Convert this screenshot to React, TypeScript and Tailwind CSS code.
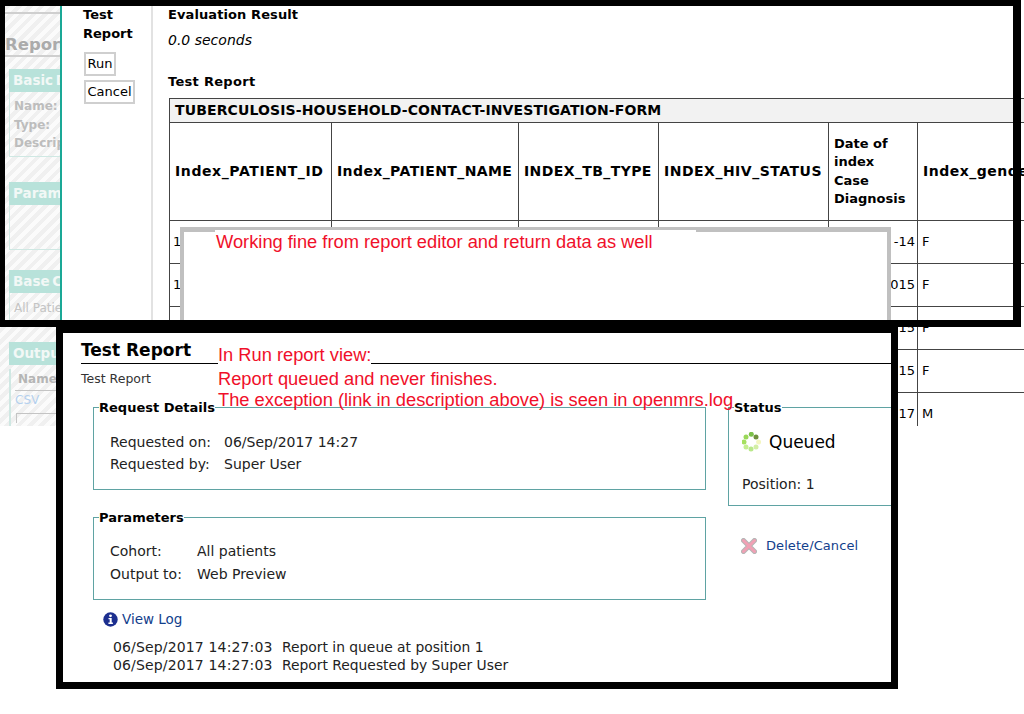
const hatch =
  "bg-[repeating-linear-gradient(135deg,#f0f0f0_0px,#f0f0f0_4px,#fbfbfb_4px,#fbfbfb_8px)]";

const columns = [
  { label: "Index_PATIENT_ID", width: "w-[162px]", type: "text-[14px] tracking-[0.6px]" },
  { label: "Index_PATIENT_NAME", width: "w-[187px]", type: "text-[14px] tracking-[0.4px]" },
  { label: "INDEX_TB_TYPE", width: "w-[140px]", type: "text-[14px] tracking-[0.4px]" },
  { label: "INDEX_HIV_STATUS", width: "w-[170px]", type: "text-[14px] tracking-[0.5px]" },
  { label: "Date of\nindex\nCase\nDiagnosis", width: "w-[89px]", type: "text-[13px]" },
  { label: "Index_gender", width: "w-[140px]", type: "text-[14px] tracking-[0.5px]" },
];

const rows = [
  { id: "1", date: "-14", gender: "F" },
  { id: "1", date: "015", gender: "F" },
  { id: "1", date: "15", gender: "F" },
  { id: "1", date: "15", gender: "F" },
  { id: "1", date: "17", gender: "M" },
];

function SideHeader({ children, className }: { children: string; className?: string }) {
  return (
    <div
      className={`h-[23px] bg-[#b8e2da] pl-[4px] text-[13.5px] leading-[23px] font-bold text-[#f2f8f6] [word-spacing:-2px] whitespace-nowrap overflow-hidden ${className ?? ""}`}
    >
      {children}
    </div>
  );
}

function Sidebar() {
  return (
    <div className={`relative w-[60px] h-full shrink-0 overflow-hidden ${hatch}`}>
      <div className="mt-[12px] ml-[5px] h-[45px] border-y-2 border-[#cfcfcf] pt-[21px] text-[16.5px] leading-[20px] font-bold text-[#ababab] whitespace-nowrap">
        Repor
      </div>
      <div className="mt-[12px] ml-[9px]">
        <SideHeader>Basic D</SideHeader>
        <div className="h-[65px] border-l border-b border-[#cfe8e3] pl-[4px] pt-[5px] text-[12px] leading-[18.5px] font-bold text-[#bdbdbd]">
          <div>Name:</div>
          <div>Type:</div>
          <div>Descrip</div>
        </div>
        <SideHeader className="mt-[25px]">Param</SideHeader>
        <div className="h-[45px] border-l border-b border-[#cfe8e3]" />
        <SideHeader className="mt-[20px]">Base C</SideHeader>
        <div className="h-[34px] border-l border-[#cfe8e3] pl-[4px] pt-[6px] text-[12px] leading-[18px] text-[#c4c4c4] whitespace-nowrap">
          All Patie
        </div>
      </div>
      <div className="mt-[15px] ml-[9px]">
        <SideHeader>Outpu</SideHeader>
        <div className="border-l-2 border-[#cfe8e3] pl-[3px] h-[61px]">
          <div className="mt-[4px] h-[22px] ml-[1px] pl-[3px] border-b border-[#c4c4c4] text-[12px] leading-[20px] font-bold text-[#b5b5b5]">
            Name
          </div>
          <div className="h-[22px] pl-[1px] text-[12px] leading-[18px] text-[#b4d0ee]">CSV</div>
          <div className="h-[10px] ml-[2px] border-l border-t border-[#c4c4c4]" />
        </div>
      </div>
    </div>
  );
}

function ReportTable() {
  return (
    <table className="table-fixed border-collapse w-[888px] text-[13px] text-black">
      <colgroup>
        {columns.map((col) => (
          <col key={col.label} className={col.width} />
        ))}
      </colgroup>
      <thead>
        <tr className="h-[24px]">
          <th
            colSpan={6}
            className="border border-[#444] bg-[#f2f2f2] pl-[5px] text-left text-[14px] tracking-[0.12px] font-bold"
          >
            TUBERCULOSIS-HOUSEHOLD-CONTACT-INVESTIGATION-FORM
          </th>
        </tr>
        <tr className="h-[98px]">
          {columns.map((col) => (
            <th
              key={col.label}
              className={`border border-[#444] px-[5px] text-left font-bold leading-[18.5px] whitespace-pre-line ${col.type}`}
            >
              {col.label}
            </th>
          ))}
        </tr>
      </thead>
      <tbody>
        {rows.map((row, i) => (
          <tr key={i} className="h-[43px]">
            <td className="border border-[#444] pl-[3px]">{row.id}</td>
            <td className="border border-[#444]" />
            <td className="border border-[#444]" />
            <td className="border border-[#444]" />
            <td className="border border-[#444] pr-[2px] text-right">{row.date}</td>
            <td className="border border-[#444] pl-[4px]">{row.gender}</td>
          </tr>
        ))}
      </tbody>
    </table>
  );
}

function EditorWindow() {
  return (
    <div className="flex h-[426px] overflow-hidden">
      <Sidebar />
      <div className="w-[93px] shrink-0 border-x-2 border-l-[#1aa896] border-r-[#e2e2e2] pl-[21px] pt-[5px]">
        <div className="text-[13px] leading-[19px] font-bold">
          Test
          <br />
          Report
        </div>
        <button className="block mt-[9px] ml-[1px] h-[24px] w-[32px] border-2 border-[#cfcfcf] text-[13px] text-black">
          Run
        </button>
        <button className="block mt-[4px] ml-[1px] h-[24px] w-[51px] border-2 border-[#cfcfcf] text-[13px] text-black">
          Cancel
        </button>
      </div>
      <div className="pl-[15px] pt-[6px] min-w-0">
        <div className="text-[13px] leading-[18px] font-bold tracking-[0.1px]">Evaluation Result</div>
        <div className="mt-[7px] text-[14px] leading-[18px] italic">0.0 seconds</div>
        <div className="mt-[24px] text-[13px] leading-[18px] font-bold tracking-[0.3px]">Test Report</div>
        <div className="mt-[7px] ml-[1px]">
          <ReportTable />
        </div>
      </div>
    </div>
  );
}

function Spinner() {
  const dots = [
    [9.3, 2.3, "#7cc04a"],
    [14, 5, "#6f8f3c"],
    [16.6, 10, "#f3f6c0"],
    [14, 15, "#d3eea4"],
    [9, 17, "#b9e88a"],
    [4, 15, "#c4ee90"],
    [2, 10, "#a6e060"],
    [4, 5, "#9ad858"],
  ] as const;
  return (
    <svg width="19" height="20" viewBox="0 0 19 20" className="shrink-0">
      {dots.map(([cx, cy, fill]) => (
        <circle key={`${cx}-${cy}`} cx={cx} cy={cy} r="2.5" fill={fill} />
      ))}
    </svg>
  );
}

function CrossIcon() {
  return (
    <svg width="16" height="16" viewBox="0 0 16 16" className="shrink-0">
      <path d="M2.5 2.5 L13.5 13.5 M13.5 2.5 L2.5 13.5" stroke="#b5b5b5" strokeWidth="5" strokeLinecap="round" />
      <path d="M2.5 2.5 L13.5 13.5 M13.5 2.5 L2.5 13.5" stroke="#f0a0b4" strokeWidth="3" strokeLinecap="round" />
    </svg>
  );
}

function InfoIcon() {
  return (
    <svg width="15" height="15" viewBox="0 0 15 15" className="shrink-0">
      <circle cx="7.5" cy="7.5" r="7.2" fill="#1c2f8f" />
      <circle cx="7.5" cy="3.8" r="1.4" fill="#fff" />
      <path d="M5.5 6h3.2v4.6h1.2v1.4H5.4v-1.4h1.3V7.3H5.5z" fill="#fff" />
    </svg>
  );
}

function Fieldset({
  title,
  className,
  bodyClassName,
  children,
}: {
  title: string;
  className: string;
  bodyClassName: string;
  children: React.ReactNode;
}) {
  return (
    <fieldset className={`border border-[#5fa3a3] ${className}`}>
      <legend className="relative top-[1px] ml-[5px] text-[13px] leading-[16px] font-bold text-black">{title}</legend>
      <div className={bodyClassName}>{children}</div>
    </fieldset>
  );
}

function RunWindow() {
  return (
    <div className="absolute left-[56px] top-[320px] w-[842px] h-[369px] border-x-[7px] border-t-[13px] border-b-[7px] border-black bg-white overflow-hidden text-[14px] text-[#222]">
      <div className="ml-[18px] mt-[5px] h-[26px] border-b border-black text-[17px] leading-[24px] font-bold text-black">
        Test Report
      </div>
      <div className="ml-[18px] mt-[6px] h-[18px] text-[12.5px] leading-[18px] text-[#333]">Test Report</div>
      <div className="flex mt-[11px]">
        <div className="ml-[30px] w-[613px] shrink-0">
          <Fieldset title="Request Details" className="h-[91px]" bodyClassName="pl-[16px] pt-[16px]">
            <div className="grid grid-cols-[114px_1fr] leading-[22px]">
              <span>Requested on:</span>
              <span>06/Sep/2017 14:27</span>
              <span>Requested by:</span>
              <span>Super User</span>
            </div>
          </Fieldset>
          <Fieldset title="Parameters" className="h-[91px] mt-[19px]" bodyClassName="pl-[16px] pt-[15px]">
            <div className="grid grid-cols-[87px_1fr] leading-[23px]">
              <span>Cohort:</span>
              <span>All patients</span>
              <span>Output to:</span>
              <span>Web Preview</span>
            </div>
          </Fieldset>
          <div className="flex items-center gap-[4px] ml-[10px] mt-[11px] h-[16px] text-[13.5px] text-[#12408c]">
            <InfoIcon />
            <span>View Log</span>
          </div>
          <div className="ml-[20px] mt-[11px] leading-[18px]">
            <div className="grid grid-cols-[169px_1fr] whitespace-nowrap">
              <span className="tracking-[0.15px]">06/Sep/2017 14:27:03</span>
              <span className="text-[13.85px]">Report in queue at position 1</span>
              <span className="tracking-[0.15px]">06/Sep/2017 14:27:03</span>
              <span className="text-[13.85px]">Report Requested by Super User</span>
            </div>
          </div>
        </div>
        <div className="ml-[22px] shrink-0 w-[200px]">
          <Fieldset title="Status" className="h-[107px] w-[200px]" bodyClassName="pl-[13px] pt-[17px]">
            <div className="flex items-center gap-[8px] text-[17px] leading-[20px] text-black">
              <Spinner />
              <span>Queued</span>
            </div>
            <div className="mt-[23px] leading-[18px]">Position: 1</div>
          </Fieldset>
          <div className="flex items-center gap-[9px] ml-[13px] mt-[31px] h-[18px] text-[13px] tracking-[0.08px] text-[#12408c]">
            <CrossIcon />
            <span>Delete/Cancel</span>
          </div>
        </div>
      </div>
    </div>
  );
}

export default function App() {
  const red = "font-['Liberation_Sans',Arial,sans-serif] text-[18.3px] text-[#f0102a] whitespace-nowrap";
  return (
    <div className="relative w-[1024px] h-[714px] overflow-hidden bg-white font-['DejaVu_Sans',Verdana,sans-serif] text-black">
      <EditorWindow />

      {/* screenshot collage: these panes sit on top of each other */}
      <div className={`absolute left-[180px] top-[227px] w-[711px] h-[100px] border-x-4 border-t-[5px] border-[#c0c0c0] bg-white pl-[32px] leading-[20px] ${red}`}>
        <div className="absolute left-[31px] top-[-2px] w-[481px] h-[4px] bg-white" />
        <span className="relative">Working fine from report editor and return data as well</span>
      </div>
      <div className="absolute left-0 top-0 w-[1021px] h-[327px] border-l-[5px] border-t-[6px] border-r-[8px] border-b-[7px] border-black pointer-events-none" />
      <RunWindow />
      <div className={`absolute left-[218px] top-[344px] leading-[22px] ${red}`}>
        <div className="w-fit bg-white">In Run report view:</div>
        <div className="mt-[2px]">Report queued and never finishes.</div>
        <div className="mt-[-1px]">The exception (link in description above) is seen in openmrs.log</div>
      </div>
    </div>
  );
}
